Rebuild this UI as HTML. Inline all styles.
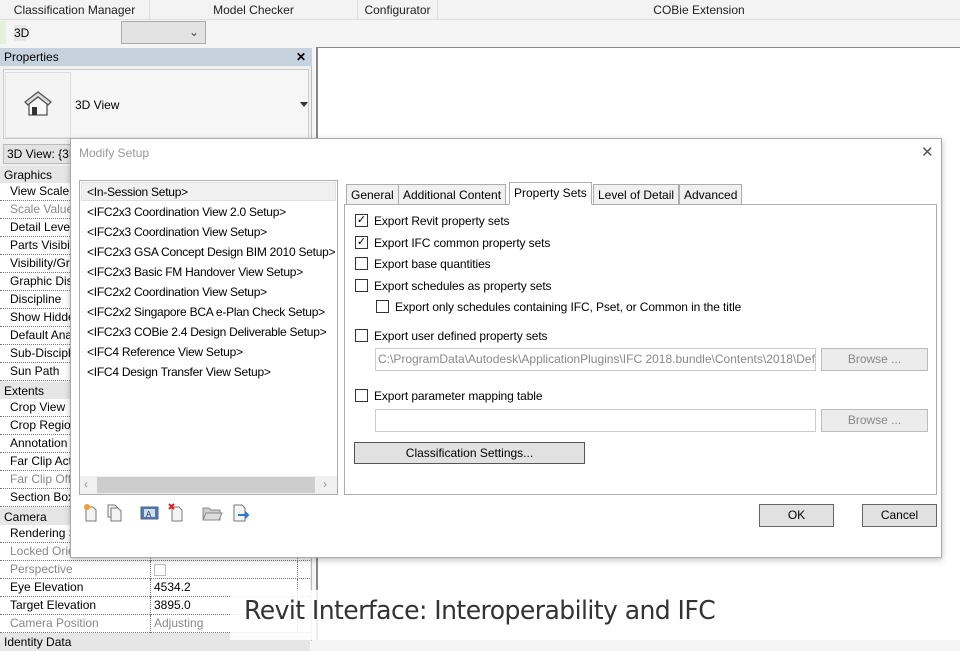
<!DOCTYPE html>
<html><head><meta charset="utf-8"><style>
*{box-sizing:border-box;margin:0;padding:0}
body{width:960px;height:640px;overflow:hidden;background:#f5f5f5;font-family:"Liberation Sans",sans-serif;font-size:12px;color:#000;position:relative}
.abs{position:absolute}
.tb{position:absolute;top:0;height:20px;line-height:20px;text-align:center;font-size:12px;color:#222;border-right:1px solid #ddd}
.row{position:absolute;left:0;width:310px;height:18px;line-height:17px;border-bottom:1px dotted #777;background:#fff}
.row .l{position:absolute;left:10px;width:140px;overflow:hidden;white-space:nowrap}
.row .v{position:absolute;left:150px;top:0;height:18px;width:148px;border-left:1px dotted #777;border-right:1px dotted #777;padding-left:3px}
.grey{color:#888}
.hdr{position:absolute;left:0;width:310px;height:18px;line-height:18px;background:#e6e6e6;padding-left:4px}
.li{position:absolute;left:87px;font-size:12px;white-space:nowrap;letter-spacing:-0.25px}
.cb{position:absolute;width:13px;height:13px;border:1px solid #333;background:#fff;font-size:11px;line-height:11px;text-align:center}
.lab{position:absolute;font-size:12px;white-space:nowrap;letter-spacing:-0.1px}
.btn{position:absolute;background:#e1e1e1;border:1px solid #adadad;text-align:center;font-size:12px}
.tab{position:absolute;top:184px;height:21px;line-height:20px;border:1px solid #adadad;background:#f0f0f0;padding:0 4px;font-size:12px}
</style></head><body>
<div class="abs" style="left:0;top:0;width:960px;height:20px;background:#f3f3f3;border-bottom:1px solid #ddd"></div>
<div class="tb" style="left:0;width:150px">Classification Manager</div>
<div class="tb" style="left:150px;width:208px">Model Checker</div>
<div class="tb" style="left:358px;width:80px">Configurator</div>
<div class="tb" style="left:438px;width:522px;border:none">COBie Extension</div>
<div class="abs" style="left:0;top:21px;width:6px;height:23px;background:#e4efdc"></div>
<div class="abs" style="left:14px;top:25px;background:#e6e6e6;width:12px;height:16px;line-height:16px">3D</div>
<div class="abs" style="left:121px;top:21px;width:85px;height:23px;background:#e3e3e3;border:1px solid #aaa;text-align:right;padding-right:6px;line-height:20px;color:#444">&#8964;</div>
<!-- properties -->
<div class="abs" style="left:0;top:48px;width:312px;height:18px;background:#c6d3df;line-height:18px;padding-left:4px">Properties<span style="position:absolute;right:6px;font-weight:bold">✕</span></div>
<div class="abs" style="left:0;top:66px;width:312px;height:575px;background:#f0f0f0;border-right:1px solid #bbb"></div>
<div class="abs" style="left:3px;top:69px;width:306px;height:70px;background:#f6f6f6;border:1px solid #ccc"></div>
<div class="abs" style="left:5px;top:72px;width:66px;height:66px;border:1px solid #ddd;background:#f4f4f4"></div>
<svg class="abs" style="left:22px;top:88px" width="32" height="32" viewBox="0 0 32 32"><path d="M3 14 L16 4 L29 14 L26 17 L16 9 L6 17Z" fill="#ddd" stroke="#555" stroke-width="1.3"/><path d="M7 16 V27 H25 V16 L16 9Z" fill="#f8f8f8" stroke="#555" stroke-width="1.3"/><rect x="10" y="19" width="5" height="8" fill="#333"/></svg>
<div class="abs" style="left:75px;top:98px">3D View</div>
<div class="abs" style="left:300px;top:102px;width:0;height:0;border-left:4px solid transparent;border-right:4px solid transparent;border-top:5px solid #333"></div>
<div class="abs" style="left:3px;top:144px;width:306px;height:20px;background:#e3e3e3;border:1px solid #bbb;line-height:18px;padding-left:3px">3D View: {3D}</div>
<div class="hdr" style="top:166px">Graphics</div>
<div class="row" style="top:183px"><span class="l">View Scale</span><span class="v"></span></div>
<div class="row" style="top:201px"><span class="l grey">Scale Value</span><span class="v"></span></div>
<div class="row" style="top:219px"><span class="l">Detail Level</span><span class="v"></span></div>
<div class="row" style="top:237px"><span class="l">Parts Visibility</span><span class="v"></span></div>
<div class="row" style="top:255px"><span class="l">Visibility/Graphics</span><span class="v"></span></div>
<div class="row" style="top:273px"><span class="l">Graphic Display</span><span class="v"></span></div>
<div class="row" style="top:291px"><span class="l">Discipline</span><span class="v"></span></div>
<div class="row" style="top:309px"><span class="l">Show Hidden</span><span class="v"></span></div>
<div class="row" style="top:327px"><span class="l">Default Analysis</span><span class="v"></span></div>
<div class="row" style="top:345px"><span class="l">Sub-Discipline</span><span class="v"></span></div>
<div class="row" style="top:363px"><span class="l">Sun Path</span><span class="v"></span></div>
<div class="hdr" style="top:382px">Extents</div>
<div class="row" style="top:399px"><span class="l">Crop View</span><span class="v"></span></div>
<div class="row" style="top:417px"><span class="l">Crop Region</span><span class="v"></span></div>
<div class="row" style="top:435px"><span class="l">Annotation</span><span class="v"></span></div>
<div class="row" style="top:453px"><span class="l">Far Clip Active</span><span class="v"></span></div>
<div class="row" style="top:471px"><span class="l grey">Far Clip Offset</span><span class="v"></span></div>
<div class="row" style="top:489px"><span class="l">Section Box</span><span class="v"></span></div>
<div class="hdr" style="top:508px">Camera</div>
<div class="row" style="top:525px"><span class="l">Rendering Settings</span><span class="v"></span></div>
<div class="row" style="top:543px"><span class="l grey">Locked Orientation</span><span class="v"></span></div>
<div class="row" style="top:561px"><span class="l grey">Perspective</span><span class="v"><span style="display:inline-block;width:12px;height:12px;border:1px solid #bbb;margin-top:3px"></span></span></div>
<div class="row" style="top:579px"><span class="l">Eye Elevation</span><span class="v">4534.2</span></div>
<div class="row" style="top:597px"><span class="l">Target Elevation</span><span class="v">3895.0</span></div>
<div class="row" style="top:615px"><span class="l grey">Camera Position</span><span class="v grey">Adjusting</span></div>
<div class="hdr" style="top:633px">Identity Data</div>
<!-- main view -->
<div class="abs" style="left:316px;top:47px;width:644px;height:593px;background:#fff;border-left:2px solid #888;border-top:1px solid #888"></div>
<!-- dialog -->
<div class="abs" style="left:70px;top:138px;width:872px;height:420px;background:#fff;border:1px solid #aaa;box-shadow:0 2px 6px rgba(0,0,0,.25)"></div>
<div class="abs" style="left:79px;top:146px;color:#999;font-size:12px">Modify Setup</div>
<div class="abs" style="left:921px;top:143px;color:#555;font-size:15px">✕</div>
<div class="abs" style="left:79px;top:180px;width:259px;height:315px;border:1px solid #adadad;background:#fff"></div>
<div class="abs" style="left:81px;top:182px;width:255px;height:19px;background:#f0f0f0;border:1px solid #e0e0e0"></div>
<div class="li" style="top:185px">&lt;In-Session Setup&gt;</div>
<div class="li" style="top:205px">&lt;IFC2x3 Coordination View 2.0 Setup&gt;</div>
<div class="li" style="top:225px">&lt;IFC2x3 Coordination View Setup&gt;</div>
<div class="li" style="top:245px">&lt;IFC2x3 GSA Concept Design BIM 2010 Setup&gt;</div>
<div class="li" style="top:265px">&lt;IFC2x3 Basic FM Handover View Setup&gt;</div>
<div class="li" style="top:285px">&lt;IFC2x2 Coordination View Setup&gt;</div>
<div class="li" style="top:305px">&lt;IFC2x2 Singapore BCA e-Plan Check Setup&gt;</div>
<div class="li" style="top:325px">&lt;IFC2x3 COBie 2.4 Design Deliverable Setup&gt;</div>
<div class="li" style="top:345px">&lt;IFC4 Reference View Setup&gt;</div>
<div class="li" style="top:365px">&lt;IFC4 Design Transfer View Setup&gt;</div>
<div class="abs" style="left:80px;top:476px;width:257px;height:18px;background:#f0f0f0"></div>
<div class="abs" style="left:97px;top:477px;width:218px;height:16px;background:#cdcdcd"></div>
<div class="abs" style="left:84px;top:477px;color:#999">‹</div>
<div class="abs" style="left:323px;top:477px;color:#999">›</div>
<!-- icons -->
<svg class="abs" style="left:82px;top:503px" width="180" height="20" viewBox="0 0 180 20">
<g fill="#f4f4f4" stroke="#777"><path d="M4 4h7l3 3v11H4z"/><path d="M26 2h7l3 3v9h-10z"/><path d="M29 5h7l3 3v10h-10z"/><path d="M90 4h7l3 3v11H90z"/><path d="M152 2h8l3 3v13h-11z"/></g>
<circle cx="5" cy="4" r="3" fill="#f0a030"/>
<rect x="59" y="4" width="17" height="12" fill="#4a7ab8" stroke="#567"/><rect x="62" y="6" width="11" height="8" fill="#cde"/><text x="64" y="14" font-size="8" font-family="Liberation Sans" fill="#235">A</text>
<path d="M87 1l5 5M92 1l-5 5" stroke="#d22" stroke-width="2"/>
<path d="M121 5h6l2 2h9v10h-17z" fill="#ccc" stroke="#888"/><path d="M121 17l3-7h16l-3 7z" fill="#ddd" stroke="#888"/>
<path d="M156 12h10M163 9l3 3-3 3" stroke="#2a7ad0" stroke-width="2" fill="none"/>
</svg>
<!-- tabs -->
<div class="abs" style="left:344px;top:204px;width:593px;height:291px;border:1px solid #adadad;background:#fff"></div>
<div class="tab" style="left:346px">General</div>
<div class="tab" style="left:398px">Additional Content</div>
<div class="tab" style="left:509px;top:182px;height:23px;background:#fff;border-bottom-color:#fff">Property Sets</div>
<div class="tab" style="left:593px">Level of Detail</div>
<div class="tab" style="left:679px">Advanced</div>
<div class="cb" style="left:355px;top:214px">✓</div><div class="lab" style="left:374px;top:214px">Export Revit property sets</div>
<div class="cb" style="left:355px;top:236px">✓</div><div class="lab" style="left:374px;top:236px">Export IFC common property sets</div>
<div class="cb" style="left:355px;top:257px"></div><div class="lab" style="left:374px;top:257px">Export base quantities</div>
<div class="cb" style="left:355px;top:279px"></div><div class="lab" style="left:374px;top:279px">Export schedules as property sets</div>
<div class="cb" style="left:376px;top:300px"></div><div class="lab" style="left:395px;top:300px">Export only schedules containing IFC, Pset, or Common in the title</div>
<div class="cb" style="left:355px;top:329px"></div><div class="lab" style="left:374px;top:329px">Export user defined property sets</div>
<div class="abs" style="left:375px;top:348px;width:441px;height:23px;border:1px solid #ccc;color:#888;line-height:21px;padding-left:2px;overflow:hidden;white-space:nowrap">C:\ProgramData\Autodesk\ApplicationPlugins\IFC 2018.bundle\Contents\2018\DefaultUserDefinedParameterSets.txt</div>
<div class="btn" style="left:821px;top:348px;width:107px;height:23px;line-height:21px;color:#888;background:#ececec;border-color:#bbb">Browse ...</div>
<div class="cb" style="left:355px;top:389px"></div><div class="lab" style="left:374px;top:389px">Export parameter mapping table</div>
<div class="abs" style="left:375px;top:409px;width:441px;height:23px;border:1px solid #ccc"></div>
<div class="btn" style="left:821px;top:409px;width:107px;height:23px;line-height:21px;color:#888;background:#ececec;border-color:#bbb">Browse ...</div>
<div class="btn" style="left:354px;top:442px;width:231px;height:22px;line-height:20px;border-color:#555">Classification Settings...</div>
<div class="btn" style="left:759px;top:504px;width:75px;height:23px;line-height:21px;border-color:#666">OK</div>
<div class="btn" style="left:862px;top:504px;width:75px;height:23px;line-height:21px;border-color:#666">Cancel</div>
<!-- caption -->
<div class="abs" style="left:230px;top:590px;width:730px;height:50px;background:rgba(255,255,255,.85)"></div>
<div class="abs" style="left:244px;top:596px;font-size:26px;color:#333;font-family:'DejaVu Sans','Liberation Sans',sans-serif;letter-spacing:-0.6px;transform:scaleX(.965);transform-origin:left">Revit Interface: Interoperability and IFC</div>
</body></html>
